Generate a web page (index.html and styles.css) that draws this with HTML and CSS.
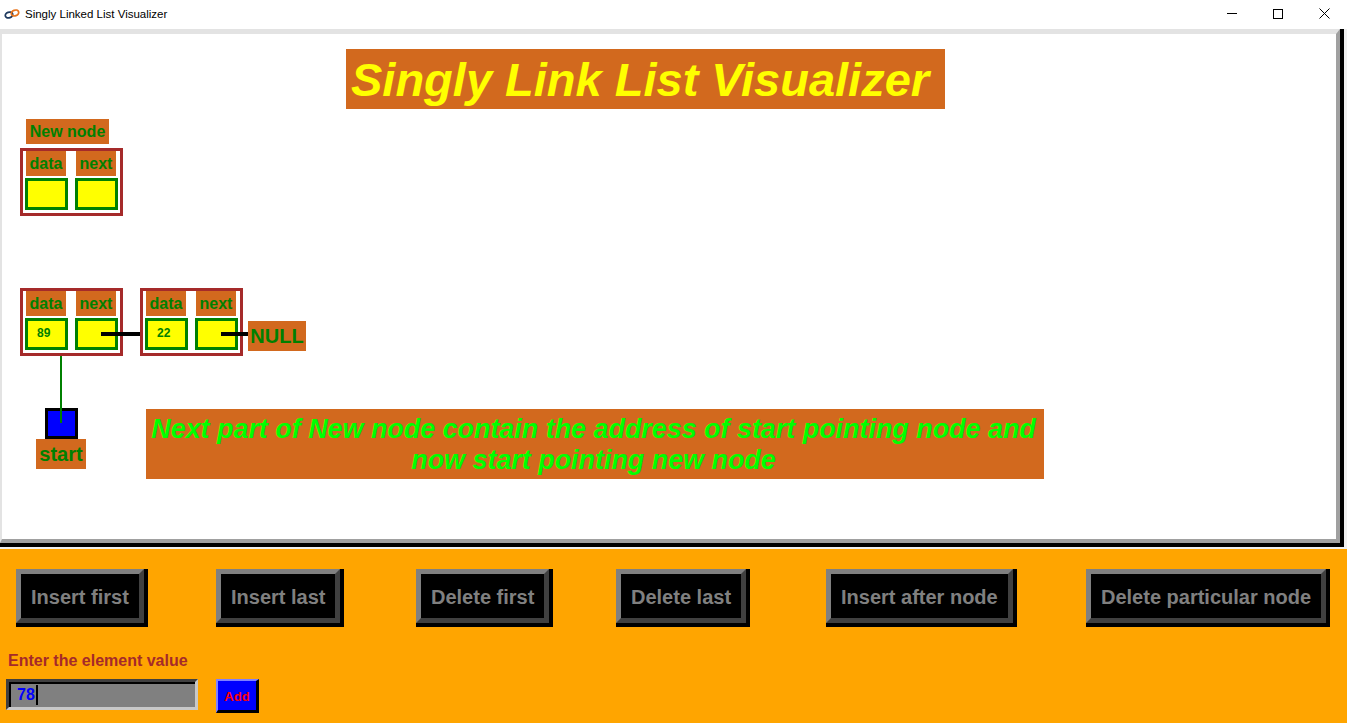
FILE: index.html
```html
<!DOCTYPE html>
<html lang="en">
<head>
<meta charset="utf-8">
<title>Singly Linked List Visualizer</title>
<link rel="stylesheet" href="styles.css">
</head>
<body>
<div class="window">
  <div class="titlebar">
    <svg class="app-icon" width="16" height="12" viewBox="0 0 16 12">
      <ellipse cx="5" cy="7" rx="3.8" ry="2.8" fill="none" stroke="#1f3a5f" stroke-width="1.8" transform="rotate(-20 5 7)"/>
      <ellipse cx="11" cy="5" rx="3.8" ry="2.8" fill="none" stroke="#e8741c" stroke-width="1.8" transform="rotate(-20 11 5)"/>
    </svg>
    <span class="title-text">Singly Linked List Visualizer</span>
    <div class="controls">
      <span class="ctl"><svg width="10" height="10" viewBox="0 0 10 10"><path d="M0 4.5h10" stroke="#000" stroke-width="1"/></svg></span>
      <span class="ctl"><svg width="10" height="10" viewBox="0 0 10 10"><rect x="0.5" y="0.5" width="9" height="9" fill="none" stroke="#000" stroke-width="1"/></svg></span>
      <span class="ctl"><svg width="11" height="11" viewBox="0 0 11 11"><path d="M0.5 0.5L10.5 10.5M10.5 0.5L0.5 10.5" stroke="#000" stroke-width="1"/></svg></span>
    </div>
  </div>

  <div class="canvas-outer"><div class="canvas-mid"><div class="canvas">
    <div class="heading">Singly Link List Visualizer</div>

    <div class="tag tag-newnode">New node</div>
    <div class="node node-new">
      <div class="field"><div class="flabel">data</div><div class="cell"></div></div>
      <div class="field"><div class="flabel">next</div><div class="cell"></div></div>
    </div>

    <div class="node node-1">
      <div class="field"><div class="flabel">data</div><div class="cell">89</div></div>
      <div class="field"><div class="flabel">next</div><div class="cell"></div></div>
    </div>
    <div class="node node-2">
      <div class="field"><div class="flabel">data</div><div class="cell">22</div></div>
      <div class="field"><div class="flabel">next</div><div class="cell"></div></div>
    </div>
    <div class="link link-1"></div>
    <div class="link link-2"></div>
    <div class="tag tag-null">NULL</div>

    <div class="start-box"></div>
    <div class="pointer"></div>
    <div class="tag tag-start">start</div>

    <div class="message">Next part of New node contain the address of start pointing node and<br>now start pointing new node</div>
  </div></div></div>

  <div class="panel">
    <div class="btn-row">
      <button class="btn">Insert first</button>
      <button class="btn">Insert last</button>
      <button class="btn">Delete first</button>
      <button class="btn">Delete last</button>
      <button class="btn">Insert after node</button>
      <button class="btn">Delete particular node</button>
    </div>
    <div class="field-label">Enter the element value</div>
    <div class="entry-row">
      <div class="entry">78<span class="caret"></span></div>
      <button class="add-btn">Add</button>
    </div>
  </div>
</div>
</body>
</html>
```

FILE: styles.css
```css
* { box-sizing: border-box; }
html, body { margin: 0; padding: 0; }
body {
  width: 1347px;
  height: 723px;
  overflow: hidden;
  font-family: "Liberation Sans", Arial, sans-serif;
  background: #fff;
}

.titlebar {
  height: 29px;
  display: flex;
  align-items: center;
  background: #fff;
  padding-bottom: 2px;
}
.app-icon { margin-left: 4px; flex: none; }
.title-text {
  margin-left: 5px;
  font-size: 11.5px;
  color: #000;
}
.controls { margin-left: auto; display: flex; height: 27px; }
.ctl {
  width: 46px;
  display: flex;
  align-items: center;
  justify-content: center;
}

.canvas-outer {
  border-right: 3px solid #f0f0f0;
  border-bottom: 2px solid #f0f0f0;
}
.canvas-mid {
  border-right: 4px solid #000;
  border-bottom: 4px solid #000;
}
.canvas {
  position: relative;
  height: 514px;
  background: #fff;
  border-style: solid;
  border-width: 5px 4px 4px 2px;
  border-color: #e3e3e3 #a0a0a0 #a0a0a0 #e3e3e3;
}

.heading {
  display: inline-block;
  margin: 15px 0 0 344px;
  width: 599px;
  height: 60px;
  padding: 1px 0 0 5px;
  background: #d2691e;
  color: #ffff00;
  font-size: 47px;
  font-weight: bold;
  font-style: italic;
  line-height: 59px;
  white-space: nowrap;
}

.tag {
  position: absolute;
  background: #d2691e;
  color: #008000;
  font-weight: bold;
  text-align: center;
  white-space: nowrap;
}
.tag-newnode { left: 24px; top: 85px; width: 83px; height: 25px; font-size: 16px; line-height: 25px; }
.tag-null { left: 246px; top: 287px; width: 58px; height: 30px; font-size: 20px; line-height: 30px; }
.tag-start { left: 34px; top: 405px; width: 50px; height: 30px; font-size: 20px; line-height: 30px; }

.node {
  position: absolute;
  display: flex;
  gap: 7px;
  padding: 0 2px 3px 2px;
  border: 3px solid #a52a2a;
  background: #fff;
}
.node-new { left: 18px; top: 114px; }
.node-1 { left: 18px; top: 254px; }
.node-2 { left: 138px; top: 254px; }

.field {
  display: flex;
  flex-direction: column;
  gap: 2px;
  width: 43px;
}
.flabel {
  margin-left: 1px;
  width: 40px;
  height: 25px;
  background: #d2691e;
  color: #008000;
  font-size: 16px;
  font-weight: bold;
  line-height: 25px;
  text-align: center;
}
.cell {
  width: 43px;
  height: 32px;
  border: 3px solid #008000;
  background: #ffff00;
  color: #008000;
  font-size: 12px;
  font-weight: bold;
  line-height: 25px;
  padding-left: 9px;
}

.link {
  position: absolute;
  height: 4px;
  background: #000;
  top: 298px;
}
.link-1 { left: 99px; width: 39px; }
.link-2 { left: 219px; width: 27px; }

.start-box {
  position: absolute;
  left: 43px;
  top: 374px;
  width: 33px;
  height: 31px;
  background: #0000ff;
  border: 3px solid #000;
}
.pointer {
  position: absolute;
  left: 58px;
  top: 322px;
  width: 2px;
  height: 67px;
  background: #008000;
}

.message {
  position: absolute;
  left: 144px;
  top: 375px;
  width: 898px;
  height: 70px;
  padding: 5px 3px 0 0;
  background: #d2691e;
  color: #00ff00;
  font-size: 26.9px;
  font-weight: bold;
  font-style: italic;
  line-height: 31px;
  text-align: center;
  white-space: nowrap;
}

.panel {
  height: 174px;
  background: #ffa500;
  padding-top: 20px;
}
.btn-row {
  display: grid;
  grid-template-columns: 200px 200px 200px 210px 260px auto;
  padding-left: 16px;
  align-items: start;
  height: 58px;
}
.btn {
  justify-self: start;
  height: 54px;
  margin: 0;
  padding: 3px 10px 0;
  background: #000;
  color: #808080;
  font-family: "Liberation Sans", Arial, sans-serif;
  font-size: 20px;
  font-weight: bold;
  line-height: 41px;
  white-space: nowrap;
  border-style: solid;
  border-width: 5px;
  border-color: #808080 #404040 #404040 #808080;
  box-shadow: 4px 0 0 #000, 0 4px 0 #000, 4px 4px 0 #000;
}

.field-label {
  margin: 25px 0 0 8px;
  color: #a52a2a;
  font-size: 16px;
  font-weight: bold;
  line-height: 18px;
}

.entry-row {
  display: flex;
  align-items: flex-start;
  gap: 18px;
  margin: 9px 0 0 6px;
}
.entry {
  width: 192px;
  height: 31px;
  background: #808080;
  border-style: solid;
  border-width: 3px;
  border-color: #404040 #c8c8c8 #c8c8c8 #404040;
  box-shadow: inset 2px 2px 0 #000;
  padding-left: 8px;
  color: #0000ff;
  font-size: 16px;
  font-weight: bold;
  line-height: 25px;
  display: flex;
  align-items: center;
}
.caret {
  display: inline-block;
  width: 2px;
  height: 20px;
  margin-left: 1px;
  background: #000;
}
.add-btn {
  width: 43px;
  height: 34px;
  margin: 0;
  padding: 3px 0 0;
  background: #0000ff;
  color: #ff0000;
  font-family: "Liberation Sans", Arial, sans-serif;
  font-size: 13px;
  font-weight: bold;
  line-height: 26px;
  text-align: center;
  border-style: solid;
  border-width: 2px 3px 3px 2px;
  border-color: #8080ff #000 #000 #8080ff;
}
```
